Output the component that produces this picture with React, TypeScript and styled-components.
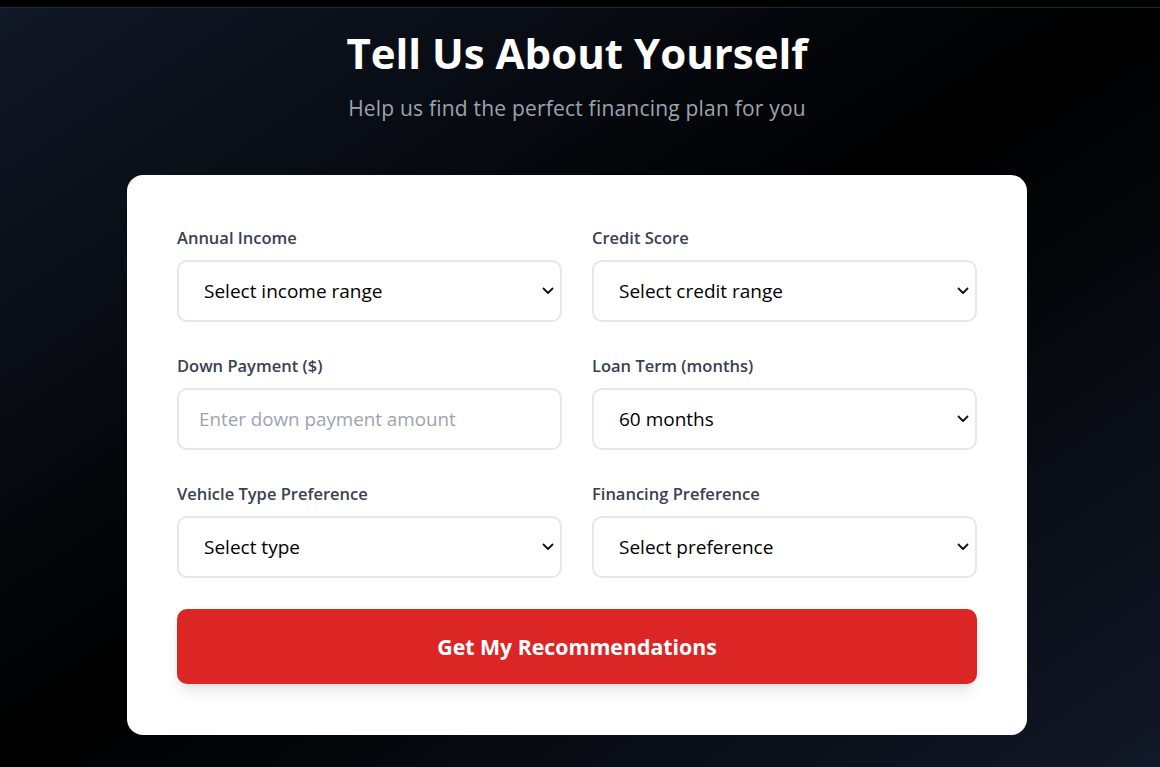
import styled, { createGlobalStyle } from "styled-components";

const GlobalStyle = createGlobalStyle`
    * { box-sizing: border-box; }
    body {
        margin: 0;
        font-family: "Open Sans", "Noto Sans", sans-serif;
        background: #000;
    }
`

const fields = [
    { label: "Annual Income", kind: "select", value: "Select income range" },
    { label: "Credit Score", kind: "select", value: "Select credit range" },
    { label: "Down Payment ($)", kind: "input", value: "Enter down payment amount" },
    { label: "Loan Term (months)", kind: "select", value: "60 months" },
    { label: "Vehicle Type Preference", kind: "select", value: "Select type" },
    { label: "Financing Preference", kind: "select", value: "Select preference" },
]

export default function App() {
    return (
        <>
            <GlobalStyle />
            <Page>
                <TopBar />
                <Main>
                    <Title>Tell Us About Yourself</Title>
                    <Subtitle>Help us find the perfect financing plan for you</Subtitle>
                    <Card>
                        <FieldGrid>
                            {fields.map((f) => (
                                <Field key={f.label}>
                                    <Label>{f.label}</Label>
                                    {f.kind === "input" ? (
                                        <TextInput type="number" placeholder={f.value} />
                                    ) : (
                                        <SelectWrap>
                                            <Select defaultValue={f.value}>
                                                <option>{f.value}</option>
                                            </Select>
                                            <Chevron viewBox="0 0 12 8" width="12" height="8">
                                                <path d="M1.5 1.5 6 6l4.5-4.5" fill="none" stroke="#111" strokeWidth="1.8" strokeLinecap="round" strokeLinejoin="round" />
                                            </Chevron>
                                        </SelectWrap>
                                    )}
                                </Field>
                            ))}
                        </FieldGrid>
                        <SubmitButton>Get My Recommendations</SubmitButton>
                    </Card>
                </Main>
            </Page>
        </>
    )
}

const Page = styled.div`
    min-height: 100vh;
    background: linear-gradient(to bottom right, #111827 0%, #000 50%, #111827 100%);
`
const TopBar = styled.div`
    height: 8px;
    background: #000;
    border-bottom: 1px solid #1f2937;
`
const Main = styled.main`
    display: flex;
    flex-direction: column;
    align-items: center;
    padding: 20px 6px 32px 0;
`
const Title = styled.h1`
    margin: 0;
    color: #fff;
    font-size: 42px;
    line-height: 50px;
    font-weight: 700;
`
const Subtitle = styled.p`
    margin: 16px 0 53px;
    color: #9ca3af;
    font-size: 21px;
    letter-spacing: 0.2px;
    line-height: 28px;
`
const Card = styled.div`
    width: 900px;
    background: #fff;
    border-radius: 16px;
    padding: 51px 50px;
    display: flex;
    flex-direction: column;
    gap: 31px;
`
const FieldGrid = styled.div`
    display: grid;
    grid-template-columns: 1fr 1fr;
    column-gap: 30px;
    row-gap: 32px;
`
const Field = styled.div`
    display: flex;
    flex-direction: column;
`
const Label = styled.label`
    font-size: 16.5px;
    line-height: 24px;
    font-weight: 600;
    color: #374151;
    margin-bottom: 10px;
`
const boxStyles = `
    width: 100%;
    height: 62px;
    border: 2px solid #e5e7eb;
    border-radius: 10px;
    background: #fff;
    font-family: "Open Sans", "Noto Sans", sans-serif;
    font-size: 19px;
    color: #000;
    outline: none;
`
const SelectWrap = styled.div`
    position: relative;
`
const Select = styled.select`
    ${boxStyles}
    padding: 0 24px 0 25px;
    appearance: none;
`
const Chevron = styled.svg`
    position: absolute;
    right: 8px;
    top: 27px;
    pointer-events: none;
`
const TextInput = styled.input`
    ${boxStyles}
    padding: 0 20px;
    font-size: 18.8px;
    appearance: textfield;
    &::placeholder { color: #9ca3af; }
`
const SubmitButton = styled.button`
    height: 75px;
    border: none;
    border-radius: 10px;
    background: #dc2626;
    color: #fff;
    font-family: "Open Sans", "Noto Sans", sans-serif;
    font-size: 21.3px;
    font-weight: 700;
    box-shadow: 0 10px 15px -3px rgba(0, 0, 0, 0.1), 0 4px 6px -4px rgba(0, 0, 0, 0.1);
    cursor: pointer;
`
